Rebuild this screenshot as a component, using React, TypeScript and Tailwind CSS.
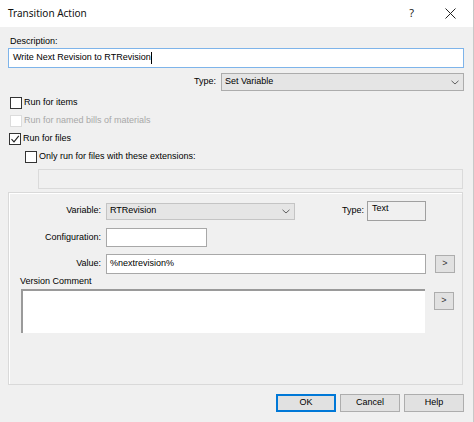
import React from "react";

const Check = ({ checked, disabled }: { checked?: boolean; disabled?: boolean }) => (
  <div
    className={`w-[12px] h-[12px] border ${disabled ? "border-[#dcdcdc]" : "border-[#333333]"} bg-white flex items-center justify-center shrink-0`}
  >
    {checked && (
      <svg width="10" height="10" viewBox="0 0 10 10">
        <path d="M1.5 5.2 L4 7.8 L8.8 1.8" fill="none" stroke="#222" strokeWidth="1.1" />
      </svg>
    )}
  </div>
);

const Chevron = () => (
  <svg width="8" height="5" viewBox="0 0 8 5">
    <path d="M0.5 0.8 L4 4 L7.5 0.8" fill="none" stroke="#606060" strokeWidth="1" />
  </svg>
);

const SmallBtn = () => (
  <div className="w-[20px] h-[18px] bg-[#e1e1e1] border border-[#adadad] flex items-center justify-center text-[#333]">
    &gt;
  </div>
);

export default function App() {
  return (
    <div
      className="w-[474px] h-[422px] bg-[#f0f0f0] flex flex-col text-[9px] text-black border-r border-[#c8c8c8] overflow-hidden"
      style={{ fontFamily: '"Liberation Sans", Arial, sans-serif' }}
    >
      {/* Title bar */}
      <div className="h-[27px] bg-white flex items-center pl-[8px] shrink-0">
        <span className="text-[10px] text-[#111]" style={{ fontFamily: '"Noto Sans", "Open Sans", sans-serif' }}>
          Transition Action
        </span>
        <span
          className="ml-auto mr-[31px] text-[11px] text-[#222]"
          style={{ fontFamily: '"Noto Sans", sans-serif' }}
        >
          ?
        </span>
        <svg width="11" height="11" viewBox="0 0 11 11" className="mr-[17px]">
          <path d="M0.5 0.5 L10.5 10.5 M10.5 0.5 L0.5 10.5" stroke="#222" strokeWidth="1" />
        </svg>
      </div>

      {/* Body */}
      <div className="flex flex-col pl-[8px] pr-[9px] pt-[9px]">
        <div className="pl-[2px] h-[11px] leading-[11px]">Description:</div>
        <div className="mt-[1px] h-[20px] bg-white border border-[#7eb4ea] flex items-center pl-[4px]">
          <span>Write Next Revision to RTRevision</span>
          <span className="w-[1px] h-[12px] bg-black ml-[0.5px]" />
        </div>

        <div className="mt-[5px] flex items-center justify-end">
          <span className="mr-[5px]">Type:</span>
          <div className="w-[243px] h-[18px] bg-[#e5e5e5] border border-[#acacac] flex items-center pl-[3px] pr-[4px]">
            <span>Set Variable</span>
            <span className="ml-auto flex">
              <Chevron />
            </span>
          </div>
        </div>

        <div className="mt-[6px] flex items-center h-[12px] pl-[2px]">
          <Check />
          <span className="ml-[2px]">Run for items</span>
        </div>
        <div className="mt-[6px] flex items-center h-[12px] pl-[2px]">
          <Check disabled />
          <span className="ml-[2px] text-[#a8a8a8]">Run for named bills of materials</span>
        </div>
        <div className="mt-[6px] flex items-center h-[12px] pl-[1px]">
          <Check checked />
          <span className="ml-[2px]">Run for files</span>
        </div>
        <div className="mt-[6px] flex items-center h-[12px] pl-[17px]">
          <Check />
          <span className="ml-[2px]">Only run for files with these extensions:</span>
        </div>
        <div className="mt-[6px] ml-[30px] mr-[1px] h-[20px] bg-[#f0f0f0] border border-[#dadada]" />

        {/* Group panel */}
        <div className="mt-[3px] mr-[1px] h-[193px] border border-[#d9d9d9] shadow-[inset_1px_1px_0_#ffffff] flex flex-col pt-[8px]">
          <div className="flex items-center h-[20px]">
            <span className="w-[92px] text-right">Variable:</span>
            <div className="ml-[5px] w-[189px] h-[17px] bg-[#e5e5e5] border border-[#c4c4c4] flex items-center pl-[3px] pr-[4px]">
              <span>RTRevision</span>
              <span className="ml-auto flex">
                <Chevron />
              </span>
            </div>
            <span className="ml-[47px]">Type:</span>
            <div className="ml-[3px] w-[59px] h-[20px] border border-[#a0a0a0] bg-[#f0f0f0] pl-[4px] pt-[1px] leading-[11px]">
              Text
            </div>
          </div>
          <div className="mt-[7px] flex items-center h-[19px]">
            <span className="w-[92px] text-right">Configuration:</span>
            <div className="ml-[5px] w-[101px] h-[19px] bg-white border border-[#a8a8a8]" />
          </div>
          <div className="mt-[7px] flex items-center h-[20px]">
            <span className="w-[92px] text-right">Value:</span>
            <div className="ml-[5px] w-[320px] h-[20px] bg-white border border-[#a8a8a8] flex items-center pl-[3px]">
              %nextrevision%
            </div>
            <div className="ml-[9px]">
              <SmallBtn />
            </div>
          </div>
          <div className="mt-[1px] pl-[11px] h-[12px] leading-[12px]">Version Comment</div>
          <div className="mt-[2px] flex items-start pl-[12px]">
            <div className="w-[404px] h-[44px] bg-white border-t-2 border-l-2 border-[#9a9a9a]" />
            <div className="ml-[9px] mt-[3px]">
              <SmallBtn />
            </div>
          </div>
        </div>

        {/* Buttons */}
        <div className="mt-[9px] flex justify-end gap-[4px]">
          <div className="w-[60px] h-[18px] bg-[#e1e1e1] border border-[#0078d7] shadow-[inset_0_0_0_1px_#0078d7] flex items-center justify-center">
            OK
          </div>
          <div className="w-[60px] h-[18px] bg-[#e1e1e1] border border-[#adadad] flex items-center justify-center">
            Cancel
          </div>
          <div className="w-[60px] h-[18px] bg-[#e1e1e1] border border-[#adadad] flex items-center justify-center">
            Help
          </div>
        </div>
      </div>
    </div>
  );
}
